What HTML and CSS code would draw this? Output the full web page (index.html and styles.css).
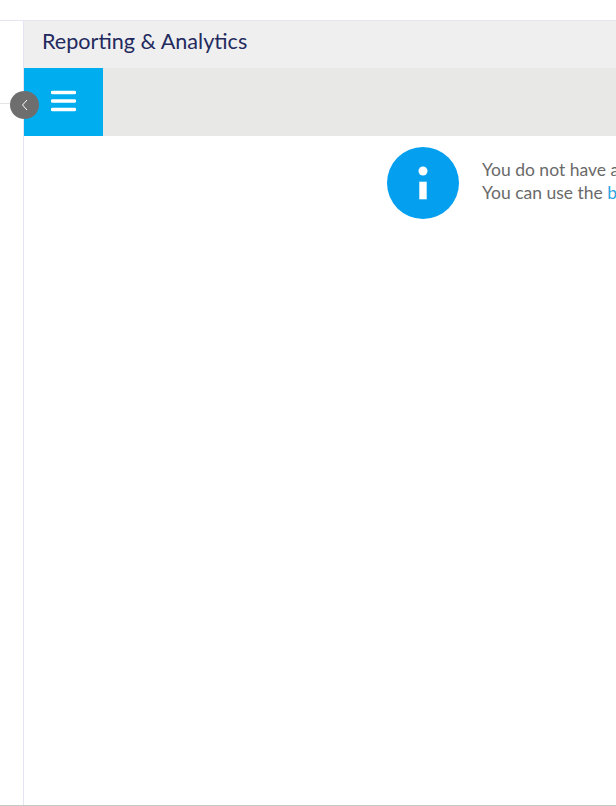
FILE: index.html
```html
<!DOCTYPE html>
<html lang="en">
<head>
<meta charset="utf-8">
<title>Reporting &amp; Analytics</title>
<link rel="stylesheet" href="styles.css">
</head>
<body>
<div class="app">
  <aside class="rail">
    <div class="rail-line"></div>
  </aside>
  <main class="main">
    <header class="title-bar"><h1 class="title">Reporting &amp; Analytics</h1></header>
    <div class="toolbar">
      <button class="menu-btn" type="button" aria-label="Menu">
        <svg width="25" height="22" viewBox="0 0 25 22"><path d="M1.500 2.500h22M1.500 11h22M1.500 19.500h22" fill="none" stroke="#fff" stroke-width="3.400" stroke-linecap="round"/></svg>
      </button>
    </div>
    <section class="notice">
      <svg class="notice-icon" width="72" height="72" viewBox="0 0 72 72">
        <circle cx="36" cy="36" r="36" fill="#049fee"/>
        <circle cx="36" cy="24" r="4.500" fill="#fff"/>
        <rect x="32.300" y="34.700" width="7.400" height="17.600" fill="#fff"/>
      </svg>
      <p class="notice-text">You do not have a<br>You can use the <a class="notice-link" href="#">b</a></p>
    </section>
  </main>
</div>
<button class="collapse" type="button" aria-label="Collapse">
  <svg width="9" height="12" viewBox="0 0 9 12"><path d="M7 1 2.500 6 7 11" fill="none" stroke="#fff" stroke-width="1"/></svg>
</button>
</body>
</html>
```
FILE: styles.css
```css
* { box-sizing: border-box; }
html, body { margin: 0; height: 100%; overflow: hidden; background: #fff; }
body { font-family: Lato, "Open Sans", sans-serif; position: relative; }
.app {
  display: flex;
  height: 806px;
  padding-top: 20px;
  border-bottom: 1px solid #c8c8c8;
}
.rail {
  flex: 0 0 24px;
  border-top: 1px solid #e6e4f3;
  border-right: 1px solid #e6e4f3;
  padding-top: 82px;
}
.rail-line { height: 1px; background: #e4e4e4; }
.main { flex: 1; min-width: 0; overflow: hidden; }
.title-bar {
  height: 48px;
  background: #efeff0;
  border-top: 1px solid #e6e4f3;
  display: flex;
  align-items: center;
  padding: 0 0 8px 18px;
}
.title { margin: 0; font-size: 21.600px; font-weight: 400; color: #232a5e; white-space: nowrap; }
.toolbar { height: 68px; background: #e8e8e7; display: flex; }
.menu-btn {
  width: 79px;
  border: 0;
  padding: 0 0 2px;
  background: #00aeef;
  display: flex;
  align-items: center;
  justify-content: center;
}
.notice {
  display: flex;
  align-items: flex-start;
  gap: 23px;
  padding: 11px 0 0 363px;
  white-space: nowrap;
}
.notice-icon { flex: none; }
.notice-text { margin: 11px 0 0; font-size: 17.500px; line-height: 23px; color: #6a6a6a; }
.notice-link { color: #2ba6e0; text-decoration: none; }
.collapse {
  position: absolute;
  left: 10px;
  top: 91px;
  width: 29px;
  height: 28px;
  padding: 0;
  border: 0;
  border-radius: 50%;
  background: #6e6e6e;
  display: flex;
  align-items: center;
  justify-content: center;
}
```
